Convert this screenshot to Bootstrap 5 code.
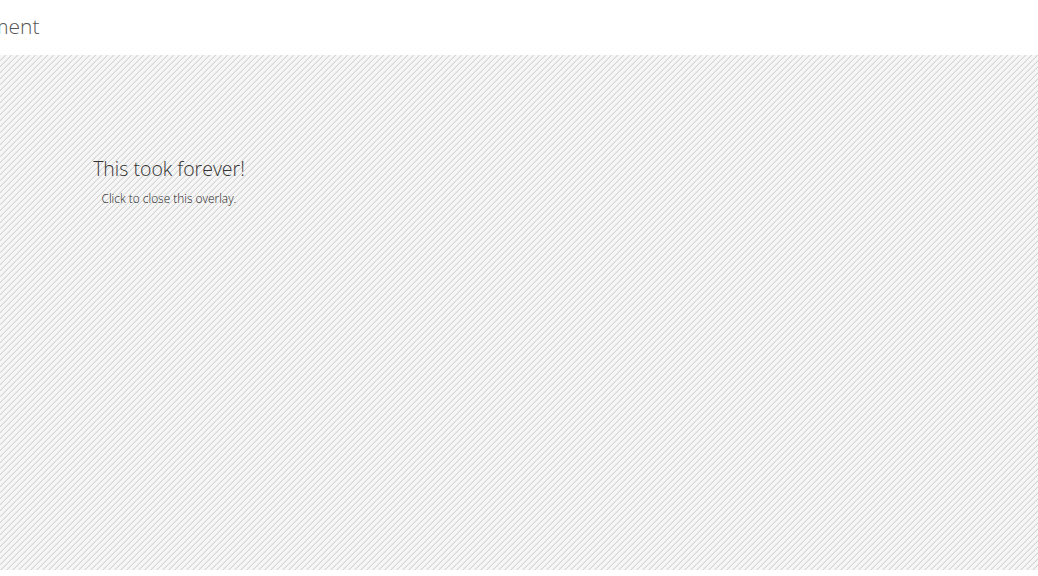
<!DOCTYPE html>
<html lang="en">
<head>
<meta charset="utf-8">
<title>Overlay</title>
<link rel="stylesheet" href="https://cdn.jsdelivr.net/npm/bootstrap@5.3.0/dist/css/bootstrap.min.css">
<style>
html, body { height: 100%; overflow: hidden; background: #fff; }
body { font-family: "Open Sans", "Liberation Sans", sans-serif; }
.topstrip { height: 55px; overflow: hidden; }
.pagetitle { font-size: 21px; font-weight: 300; color: #555; margin-left: -10px; line-height: 53px; white-space: nowrap; }
.stripefield { height: 515px; background-color: #f5f5f5; background-size: 6px 6px; background-image: url("data:image/svg+xml,%3Csvg xmlns='http://www.w3.org/2000/svg' width='6' height='6' shape-rendering='crispEdges'%3E%3Crect width='6' height='6' fill='%23f6f6f6'/%3E%3Cg fill='%23eaeaea'%3E%3Crect x='0' y='4' width='1' height='1'/%3E%3Crect x='1' y='3' width='1' height='1'/%3E%3Crect x='2' y='2' width='1' height='1'/%3E%3Crect x='3' y='1' width='1' height='1'/%3E%3Crect x='4' y='0' width='1' height='1'/%3E%3Crect x='5' y='5' width='1' height='1'/%3E%3C/g%3E%3Cg fill='%23d4d4d4'%3E%3Crect x='0' y='5' width='1' height='1'/%3E%3Crect x='1' y='4' width='1' height='1'/%3E%3Crect x='2' y='3' width='1' height='1'/%3E%3Crect x='3' y='2' width='1' height='1'/%3E%3Crect x='4' y='1' width='1' height='1'/%3E%3Crect x='5' y='0' width='1' height='1'/%3E%3C/g%3E%3C/svg%3E"); padding: 102px 0 0 83px; }
.msgbox { width: 172px; }
.msgtitle { font-size: 19.5px; font-weight: 300; line-height: 24px; margin: 0; color: #333; white-space: nowrap; }
.msgsub { font-size: 11.9px; font-weight: 300; line-height: 14px; margin: 10px 0 0; color: #222; white-space: nowrap; }
</style>
</head>
<body>
<header class="topstrip d-flex">
  <h1 class="pagetitle mb-0">ment</h1>
</header>
<main class="stripefield">
  <div class="msgbox text-center">
    <h2 class="msgtitle">This took forever!</h2>
    <p class="msgsub">Click to close this overlay.</p>
  </div>
</main>
<script src="https://cdn.jsdelivr.net/npm/bootstrap@5.3.0/dist/js/bootstrap.bundle.min.js"></script>
</body>
</html>
